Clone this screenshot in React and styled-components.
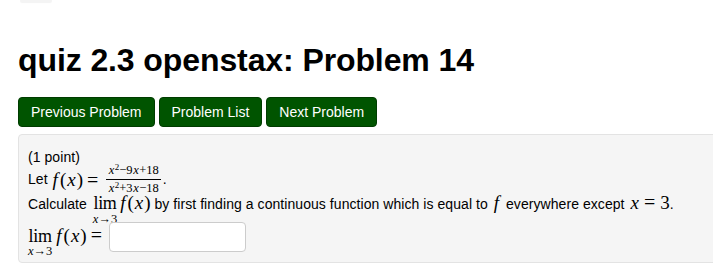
import React from "react";
import styled, { createGlobalStyle } from "styled-components";

const GlobalStyle = createGlobalStyle`
  html, body {
    margin: 0;
    padding: 0;
    background: #ffffff;
  }
  body {
    font-family: "Liberation Sans", Arial, Helvetica, sans-serif;
    color: #000;
  }
`;

const Page = styled.div`
  width: 713px;
  height: 273px;
  overflow: hidden;
  padding-left: 18px;
  box-sizing: border-box;
`;

const TopNub = styled.div`
  width: 32px;
  height: 2px;
  margin-left: 2px;
  background: #f4f4f4;
  border-radius: 0 0 4px 4px;
  box-shadow: 0 1px 1px rgba(0, 0, 0, 0.05);
`;

const Title = styled.h1`
  margin: 40px 0 0 0;
  height: 36px;
  line-height: 36px;
  font-size: 32px;
  font-weight: 700;
  letter-spacing: -0.1px;
`;

const Nav = styled.div`
  display: flex;
  gap: 4px;
  margin-top: 19px;
`;

const NavButton = styled.button`
  height: 30px;
  padding: 0 12px;
  background: #005400;
  border: 1px solid #003c00;
  border-radius: 4px;
  color: #ffffff;
  font-family: "Liberation Sans", Arial, sans-serif;
  font-size: 14px;
  line-height: 28px;
  cursor: pointer;
`;

const ProblemBox = styled.div`
  margin-top: 7px;
  width: 720px;
  height: 129px;
  box-sizing: border-box;
  padding: 14px 9px 0;
  background: #f5f5f5;
  border: 1px solid #e3e3e3;
  border-radius: 4px;
  font-size: 14px;
  letter-spacing: 0.06px;
`;

const Line = styled.div`
  display: flex;
  align-items: ${(p) => p.align || "baseline"};
  height: ${(p) => p.h}px;
  line-height: 17px;
  white-space: nowrap;
`;

const M = styled.span`
  font-family: "Liberation Serif", "Times New Roman", serif;
  font-size: 19px;
  line-height: 18px;
  letter-spacing: 0;
  font-style: ${(p) => (p.i ? "italic" : "normal")};
  margin: ${(p) => p.m || "0"};
`;

const Eq = styled.span`
  font-family: "Liberation Serif", "Times New Roman", serif;
  font-size: 20px;
  line-height: 18px;
  letter-spacing: 0;
  margin: ${(p) => p.m || "0 4px"};
`;

const Frac = styled.span`
  display: inline-flex;
  flex-direction: column;
  align-items: center;
  font-family: "Liberation Serif", "Times New Roman", serif;
  font-size: 12.5px;
  line-height: 11px;
  letter-spacing: 0;
  margin: -1px 2px 0 4px;
  i {
    margin: 0 0.5px;
  }
  sup {
    font-size: 9px;
    line-height: 0;
    vertical-align: 4px;
  }
`;

const Num = styled.span`
  padding: 0 2px 3px;
  border-bottom: 1px solid #000;
`;

const Den = styled.span`
  padding: 3px 2px 0;
`;

const Lim = styled.span`
  display: inline-flex;
  flex-direction: column;
  align-items: center;
  font-family: "Liberation Serif", "Times New Roman", serif;
  font-size: 18px;
  line-height: 18px;
  letter-spacing: -0.3px;
  margin: ${(p) => p.m || "0"};
`;

const LimSub = styled.span`
  font-size: 12.5px;
  line-height: 11px;
  letter-spacing: 0;
  margin-top: ${(p) => p.top || 0}px;
  i {
    font-style: italic;
  }
`;

const Answer = styled.input`
  width: 137px;
  height: 30px;
  box-sizing: border-box;
  margin: -4px 0 0 3px;
  border: 1px solid #cccccc;
  border-radius: 4px;
  background: #ffffff;
  align-self: flex-start;
`;

const Fx = ({ m }) => (
  <M m={m}>
    <M i m="0 2px 0 1px">f</M>(<M i m="0 1px">x</M>)
  </M>
);

const LimX3 = ({ top, m }) => (
  <Lim m={m}>
    lim
    <LimSub top={top}>
      <i>x</i>→3
    </LimSub>
  </Lim>
);

export default function App() {
  return (
    <>
      <GlobalStyle />
      <Page>
        <TopNub />
        <Title>quiz 2.3 openstax: Problem 14</Title>
        <Nav>
          <NavButton>Previous Problem</NavButton>
          <NavButton>Problem List</NavButton>
          <NavButton>Next Problem</NavButton>
        </Nav>
        <ProblemBox>
          <Line h={17}>(1 point)</Line>
          <Line h={27} align="center">
            Let&nbsp;
            <Fx />
            <Eq>=</Eq>
            <Frac>
              <Num>
                <i>x</i>
                <sup>2</sup>−9<i>x</i>+18
              </Num>
              <Den>
                <i>x</i>
                <sup>2</sup>+3<i>x</i>−18
              </Den>
            </Frac>
            .
          </Line>
          <Line h={33}>
            Calculate&nbsp;
            <LimX3 top={2} m="0 2px 0 2px" />
            <Fx />
            &nbsp;by first finding a continuous function which is equal to&nbsp;
            <M i m="0 3px 0 2px">f</M>
            &nbsp;everywhere except&nbsp;
            <M i m="0 0 0 2px">x</M>
            <Eq m="0 5px">=</Eq>
            <M>3</M>.
          </Line>
          <Line h={33}>
            <LimX3 top={1} m="0 3px 0 0" />
            <Fx />
            <Eq>=</Eq>
            <Answer type="text" />
          </Line>
        </ProblemBox>
      </Page>
    </>
  );
}
